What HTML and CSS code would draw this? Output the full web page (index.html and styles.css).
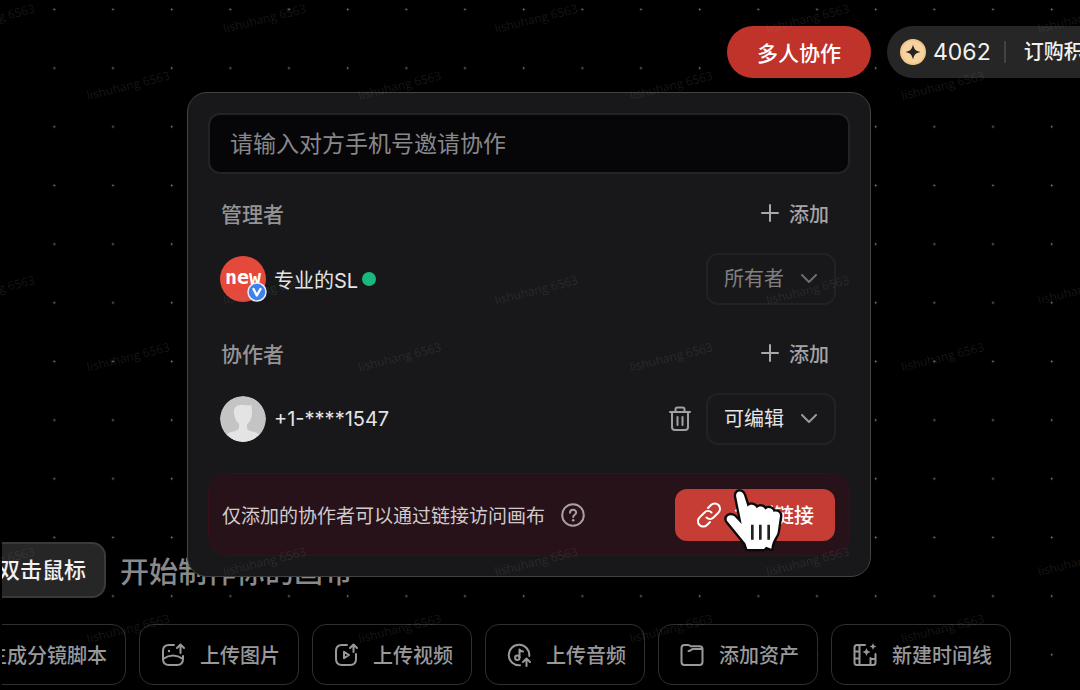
FILE: index.html
```html
<!DOCTYPE html>
<html lang="zh-CN">
  <head>
    <meta charset="UTF-8" />
    <meta name="viewport" content="width=device-width, initial-scale=1.0" />
    <title>多人协作</title>
    <link rel="stylesheet" href="styles.css">
  </head>
  <body>
    <div class="app">
      <!-- 画布点阵 -->
      <svg class="dots" aria-hidden="true">
        <defs>
          <pattern id="dot" width="176" height="176" patternUnits="userSpaceOnUse" patternTransform="scale(0.33333)">
            <circle cx="163" cy="28" r="3" fill="#777" />
          </pattern>
        </defs>
        <rect width="100%" height="100%" fill="url(#dot)" />
      </svg>

      <header class="header">
        <div class="collab">
          <button class="collab-btn" type="button">多人协作</button>

          <section class="panel" aria-label="多人协作">
            <input class="invite" type="text" placeholder="请输入对方手机号邀请协作" aria-label="请输入对方手机号邀请协作" />

            <div class="group-title">
              <h2>管理者</h2>
              <button class="add" type="button">
                <svg class="icon-plus" viewBox="0 0 18 18"><path d="M9 1v16M1 9h16" /></svg>
                添加
              </button>
            </div>
            <div class="member">
              <div class="avatar avatar-new">
                new
                <svg class="badge" viewBox="0 0 20 20">
                  <circle cx="10" cy="10" r="9" fill="#3b82ee" stroke="#e8eef8" stroke-width="1.5" />
                  <path d="M6.5 7l3.3 6.5L13.5 7" fill="none" stroke="#fff" stroke-width="2.4" />
                </svg>
              </div>
              <span class="name">专业的SL</span>
              <i class="online"></i>
              <div class="role disabled">
                <select aria-label="专业的SL 的权限" disabled>
                  <option>所有者</option>
                </select>
                <svg class="arrow" viewBox="0 0 16 10"><path d="M1 1l7 7 7-7" /></svg>
              </div>
            </div>

            <div class="group-title">
              <h2>协作者</h2>
              <button class="add" type="button">
                <svg class="icon-plus" viewBox="0 0 18 18"><path d="M9 1v16M1 9h16" /></svg>
                添加
              </button>
            </div>
            <div class="member">
              <svg class="avatar" viewBox="0 0 46 46">
                <circle cx="23" cy="23" r="23" fill="#c4c4c4" />
                <path d="M14 15c0-4 3-6 8-6 4 0 6 1 10 0-1 2 0 4 0 7 0 6-2 10-5 12v4c1 4 8 3 12 6-4 5-9 8-16 8S11 43 7 38c4-3 11-2 12-6v-4c-3-3-5-7-5-13z" fill="#e4e4e4" />
              </svg>
              <span class="name">+1-****1547</span>
              <button class="remove" type="button" aria-label="移除">
                <svg viewBox="0 0 22 26">
                  <path d="M1 6h20M6.500 6V3.500Q6.500 1.500 8.500 1.500h5q2 0 2 2V6M3 6v15q0 3 3 3h10q3 0 3-3V6M8.500 11v8M13.500 11v8" />
                </svg>
              </button>
              <div class="role">
                <select aria-label="+1-****1547 的权限">
                  <option>可编辑</option>
                </select>
                <svg class="arrow" viewBox="0 0 16 10"><path d="M1 1l7 7 7-7" /></svg>
              </div>
            </div>

            <div class="notice">
              <span>仅添加的协作者可以通过链接访问画布</span>
              <svg class="help" viewBox="0 0 24 24">
                <circle cx="12" cy="12" r="10.800" />
                <path d="M9 9.800c0-4 6.200-4 6.200-.3 0 2.300-3 2.300-3 4.600" />
                <circle class="point" cx="12.200" cy="17.300" r="1.300" />
              </svg>
              <button class="copy" type="button">
                <svg class="link" viewBox="0 0 26 26">
                  <path d="M10.500 15.500l0 0a5 5 0 0 0 7 0l5-5a5.300 5.300 0 0 0-7.500-7.500l-3 3M15.500 10.500a5 5 0 0 0-7 0l-5 5a5.300 5.300 0 0 0 7.500 7.500l3-3" />
                </svg>
                复制链接
                <svg class="cursor" viewBox="180 27 210 210" aria-hidden="true">
                  <path class="hand" d="M229 64C224 44 247 40 252 58L263 92C270 82 286 85 290 97C297 88 312 90 316 101C324 92 338 96 341 108C350 104 361 110 360 120L353 168C351 182 337 190 334 218L318 212L312 219L262 219L256 202L202 136C194 122 210 112 223 121L245 144Z" />
                  <path class="fold" d="M277 146v45M301 146v45M326 146v45" />
                </svg>
              </button>
            </div>
          </section>
        </div>

        <div class="credits">
          <svg class="coin" viewBox="0 0 26 26">
            <circle cx="13" cy="13" r="13" fill="#f1c78b" />
            <circle cx="13" cy="13" r="11" fill="#f6d3a0" />
            <path d="M13 5.500C14.200 10.500 15.500 11.800 20.500 13C15.500 14.200 14.200 15.500 13 20.500C11.800 15.500 10.500 14.200 5.500 13C10.500 11.800 11.800 10.500 13 5.500z" fill="#262324" />
          </svg>
          <span class="count">4062</span>
          <a class="buy" href="#">订购积分</a>
        </div>
      </header>

      <main class="main">
        <p class="hint"><kbd>双击鼠标</kbd>开始制作你的画布</p>
        <div class="actions">
          <button type="button">
            <svg viewBox="0 0 24 24"><path d="M3 4h18M3 12h18M3 20h18" /></svg>
            生成分镜脚本
          </button>
          <button type="button">
            <svg viewBox="0 0 24 24">
              <path d="M13 2H8Q2 2 2 8v8q0 6 6 6h8q6 0 6-6v-3M2 16Q12 9 22 16M19.500 10V2M16 5l3.500-3.500L23 5" />
              <circle class="point" cx="8" cy="8" r="1.200" />
            </svg>
            上传图片
          </button>
          <button type="button">
            <svg viewBox="0 0 24 24">
              <path d="M13 2H8Q2 2 2 8v8q0 6 6 6h8q6 0 6-6v-5M19.500 9V2M16 5l3.500-3.500L23 5M10 8.800v6.400l5-3.200z" />
            </svg>
            上传视频
          </button>
          <button type="button">
            <svg viewBox="0 0 24 24">
              <path d="M22.300 13A10.300 10.300 0 1 0 13 22.300M12.500 14.500V6.500q1 2 3.500 2M19.500 23v-7M16 19l3.500-3.500L23 19" />
              <circle cx="10.300" cy="14.700" r="2.200" />
            </svg>
            上传音频
          </button>
          <button type="button">
            <svg viewBox="0 0 24 24">
              <path d="M1.500 5q0-3 3-3h3.500q1.500 0 2.500 1.200h9Q22.500 3.200 22.500 6V19q0 3-3 3h-15q-3 0-3-3zM8.500 8q1.500 0 2.500-1t2.500-1h9" />
            </svg>
            添加资产
          </button>
          <button type="button">
            <svg viewBox="0 0 24 24">
              <path d="M12 2H4Q1.500 2 1.500 4.500v15Q1.500 22 4 22h16q2.500 0 2.500-2.500V11M6.500 2v20M17.500 22v-7M1.500 8.500h5M1.500 15.500h5M17.500 16h5" />
              <path class="point" d="M20 0l1 2.500 2.500 1-2.500 1L20 7l-1-2.500-2.500-1 2.500-1zM13.500 5l1.200 2.800 2.800 1.200-2.800 1.200-1.200 2.800-1.200-2.800L9.500 9l2.800-1.200z" />
            </svg>
            新建时间线
          </button>
        </div>
      </main>

      <svg class="watermark" aria-hidden="true"></svg>
    </div>

    <script>
      // 水印: 两组文字交错平铺
      var watermarkEl = document.querySelector(".watermark");
      var step = 271.5;

      function addMark(x, y) {
        var textEl = document.createElementNS("http://www.w3.org/2000/svg", "text");
        textEl.setAttribute("transform", `translate(${x} ${y}) rotate(-14)`);
        textEl.textContent = "lishuhang 6563";
        watermarkEl.appendChild(textEl);
      }

      for (var y = 33; y < window.innerHeight; y += step) {
        for (var x = -47; x < window.innerWidth; x += step) {
          addMark(x, y);
          addMark(x + 135, y + 67);
        }
      }
    </script>
  </body>
</html>
```
FILE: styles.css
```css
/* 样式重置 */
* {
  box-sizing: border-box;
}

body,
h2,
p {
  margin: 0;
  padding: 0;
}

body,
button,
input,
select,
kbd {
  font-family: Inter, "Noto Sans CJK SC", sans-serif;
  font-size: 20px;
}

body {
  background-color: #000;
  color: #e4e4e6;
}

button {
  border: none;
  padding: 0;
  background: none;
  color: inherit;
  white-space: nowrap;
  cursor: pointer;
}

svg {
  flex: none;
  fill: none;
  stroke-linecap: round;
  stroke-linejoin: round;
}

.app {
  position: relative;
  display: flex;
  flex-direction: column;
  min-height: 100vh;
  overflow: hidden;
}

.dots,
.watermark {
  position: absolute;
  top: 0;
  left: 0;
  width: 100%;
  height: 100%;
}

.watermark {
  z-index: 3;
  pointer-events: none;
  fill: rgba(150, 150, 155, 0.16);
  font-family: "Open Sans", sans-serif;
  font-size: 12px;
}

/* 顶部 */
.header {
  position: relative;
  z-index: 2;
  display: flex;
  justify-content: flex-end;
  gap: 16px;
  padding-top: 26px;
}

.collab {
  position: relative;
}

.collab-btn {
  height: 52px;
  padding: 0 30px;
  border-radius: 26px;
  background-color: #c0332b;
  color: #fff;
  font-size: 21px;
  font-weight: 500;
}

.credits {
  display: flex;
  align-items: center;
  width: 193px;
  height: 52px;
  padding-left: 13px;
  border-radius: 26px 0 0 26px;
  background-color: #262627;
  white-space: nowrap;
  overflow: hidden;
}

.coin {
  width: 26px;
  height: 26px;
}

.count {
  margin-left: 7px;
  padding-right: 13px;
  color: #f2f2f2;
  font-size: 23px;
}

.buy {
  padding-left: 18px;
  border-left: 2px solid #434345;
  color: #f2f2f2;
  font-weight: 500;
  line-height: 22px;
  text-decoration: none;
}

/* 协作弹窗 */
.panel {
  position: absolute;
  top: 66px;
  right: 0;
  width: 684px;
  padding: 20px;
  border: 1px solid #434345;
  border-radius: 20px;
  background-color: #18181a;
}

.invite {
  display: block;
  width: 100%;
  height: 61px;
  padding: 0 20px;
  border: 2px solid #232325;
  border-radius: 12px;
  background-color: #060608;
  color: #e4e4e6;
  font-size: 23px;
}

.invite::placeholder {
  color: #88888a;
}

.group-title {
  display: flex;
  justify-content: space-between;
  align-items: center;
  height: 30px;
  margin-top: 33px;
  padding: 0 21px 0 13px;
}

.invite + .group-title {
  margin-top: 24px;
}

.group-title h2 {
  color: #949496;
  font-size: 21px;
  font-weight: 500;
}

.add {
  display: flex;
  align-items: center;
  gap: 10px;
  color: #a4a4a6;
  font-weight: 500;
}

.icon-plus {
  width: 18px;
  height: 18px;
  stroke: #a8a8aa;
  stroke-width: 2;
}

.member {
  display: flex;
  align-items: center;
  height: 52px;
  margin-top: 25px;
  padding: 0 14px 0 12px;
}

.avatar {
  position: relative;
  flex: none;
  width: 46px;
  height: 46px;
  border-radius: 50%;
}

.avatar-new {
  background-color: #e5493a;
  color: #fff;
  font-family: "DejaVu Sans Mono", monospace;
  font-weight: 700;
  line-height: 42px;
  text-align: center;
}

.badge {
  position: absolute;
  right: -1px;
  bottom: 0;
  width: 20px;
  height: 20px;
}

.name {
  margin-left: 8px;
}

.online {
  width: 14px;
  height: 14px;
  margin-left: 4px;
  border-radius: 50%;
  background-color: #1ab87c;
}

.remove {
  margin-left: auto;
  margin-right: 15px;
}

.remove svg {
  display: block;
  width: 22px;
  height: 26px;
  stroke: #a0a0a2;
  stroke-width: 2;
}

.role {
  position: relative;
  width: 130px;
}

.online + .role {
  margin-left: auto;
}

.role select {
  appearance: none;
  width: 100%;
  height: 52px;
  padding: 0 16px;
  border: 2px solid #222224;
  border-radius: 12px;
  background-color: transparent;
  color: #e4e4e6;
  opacity: 1;
}

.role.disabled select {
  color: #808082;
}

.arrow {
  position: absolute;
  top: 21px;
  right: 19px;
  width: 16px;
  height: 10px;
  stroke: #99999b;
  stroke-width: 2;
  pointer-events: none;
}

.role.disabled .arrow {
  stroke: #6c6c6e;
}

.notice {
  display: flex;
  align-items: center;
  height: 83px;
  margin-top: 28px;
  padding: 0 14px 0 13px;
  border: 1px solid #36101a;
  border-radius: 20px;
  background-color: #261218;
  color: #d2cacd;
  font-size: 19px;
  white-space: nowrap;
}

.help {
  width: 24px;
  height: 24px;
  margin-left: 16px;
  stroke: #aaa0a3;
  stroke-width: 2;
}

.help .point {
  fill: #aaa0a3;
  stroke: none;
}

.copy {
  position: relative;
  display: flex;
  align-items: center;
  gap: 12px;
  height: 52px;
  margin-left: auto;
  padding: 0 21px;
  border-radius: 12px;
  background-color: #c63d35;
  color: #fff;
  font-weight: 500;
}

.link {
  width: 26px;
  height: 26px;
  stroke: #fff;
  stroke-width: 2;
}

.cursor {
  position: absolute;
  top: -4px;
  left: 45px;
  width: 70px;
  height: 70px;
}

.hand {
  fill: #fff;
  stroke: #0a0a0a;
  stroke-width: 14;
  paint-order: stroke;
}

.fold {
  stroke: #222;
  stroke-width: 8;
  stroke-linecap: butt;
}

/* 底部引导 */
.main {
  position: relative;
  z-index: 1;
  margin: auto 0 5px 2px;
  overflow: hidden;
}

.hint {
  display: flex;
  align-items: center;
  gap: 14px;
  margin-left: -24px;
  color: #8a8a8c;
  font-size: 29px;
  font-weight: 500;
  white-space: nowrap;
}

.hint kbd {
  height: 56px;
  padding: 0 18px;
  border: 2px solid #3a3a3c;
  border-radius: 14px;
  background-color: #262627;
  color: #f2f2f2;
  font-size: 22px;
  line-height: 52px;
}

.actions {
  display: flex;
  justify-content: flex-end;
  gap: 13px;
  margin-top: 26px;
  padding-right: 69px;
}

.actions button {
  display: flex;
  flex: none;
  align-items: center;
  gap: 15px;
  height: 61px;
  padding: 0 18px 0 21px;
  border: 1px solid #303032;
  border-radius: 14px;
  background-color: #000;
  color: #99999b;
  font-weight: 500;
}

.actions svg {
  width: 24px;
  height: 24px;
  stroke: #99999b;
  stroke-width: 2;
}

.actions .point {
  fill: #99999b;
  stroke: none;
}
```
